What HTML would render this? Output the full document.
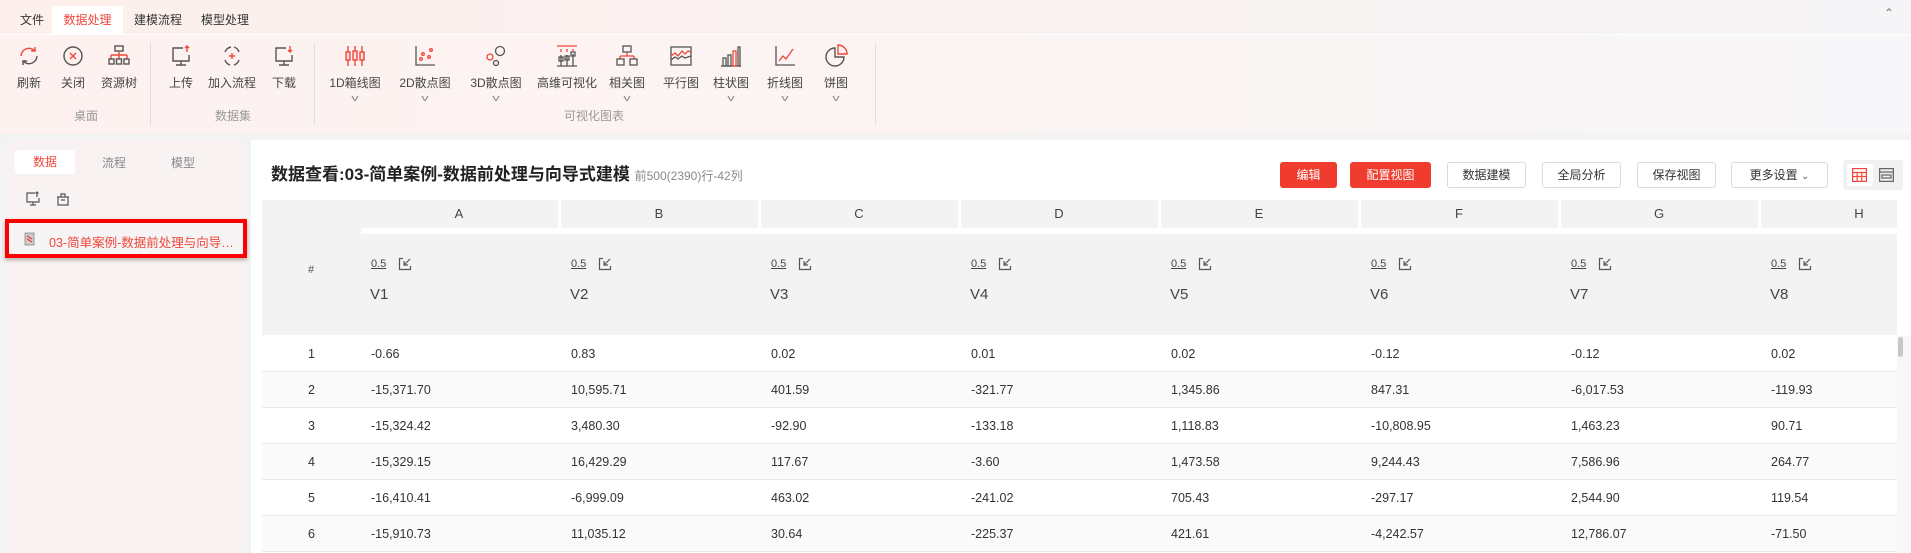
<!DOCTYPE html>
<html><head><meta charset="utf-8">
<style>
*{margin:0;padding:0;box-sizing:border-box}
body{width:1911px;height:553px;overflow:hidden;background:#f3f3f3;font-family:"Liberation Sans","Noto Sans CJK SC",sans-serif;color:#333;position:relative}
.abs{position:absolute}
#top{left:0;top:0;width:1911px;height:134px;background:linear-gradient(90deg,#fcefec 0%,#faf2f1 50%,#f5f4f6 100%)}
.tab{position:absolute;top:6px;height:28px;line-height:28px;font-size:12px;color:#333;text-align:center}
#ribbon{left:0;top:34px;width:1911px;height:99px;background:linear-gradient(90deg,#fdf2f0 0%,#fbf4f3 50%,#f7f6f8 100%);border-top:1px solid #fff}
.btn{position:absolute;top:8px;width:70px;margin-left:-35px;text-align:center;font-size:12px;color:#444}
.btn svg{display:block;margin:0 auto;width:26px;height:26px}
.btn .lb{margin-top:5px;white-space:nowrap}
.btn .chev{margin-top:2px;font-size:9px;color:#888;transform:scaleX(1.6)}
.sep{position:absolute;top:8px;width:1px;height:82px;background:#e3dcdc}
.grp{position:absolute;top:72px;font-size:12px;color:#999;transform:translateX(-50%)}
#left{left:5px;top:140px;width:240px;height:413px;background:#f8f3f2;border-radius:4px}
#main{left:251px;top:140px;width:1660px;height:413px;background:#fff}
.b{position:absolute;top:162px;height:26px;line-height:24px;font-size:12px;text-align:center;border-radius:3px;border:1px solid #dcdce0;background:#fff;color:#333}
.b.r{background:#f03c2e;border-color:#f03c2e;color:#fff}
#tbl{left:262px;top:200px;width:1635px;height:353px;overflow:hidden}
.hdr{position:absolute;top:0;left:0;width:1700px;height:135px;background:#f3f3f3}
.col{position:absolute;top:0;height:135px;width:200px}
.let{position:absolute;top:0;left:0;width:196px;height:28px;line-height:28px;text-align:center;font-size:13px;color:#444;background:#f3f3f3;border-radius:4px}
.gap{position:absolute;top:28px;left:0;width:200px;height:6px;background:#fff}
.vs{position:absolute;top:0;left:197px;width:3px;height:34px;background:#fff}
.ico{position:absolute;top:57px;left:10px;font-size:11px;color:#444;white-space:nowrap;line-height:14px}
.ico u{text-decoration:underline}
.ico svg{position:absolute;left:27px;top:0}
.vn{position:absolute;top:86px;left:9px;font-size:15px;color:#444;white-space:nowrap}
.row{position:absolute;left:0;width:1700px;height:36px;border-bottom:1px solid #e8e8e8;font-size:12.5px;color:#333}
.row span{position:absolute;top:11px}
</style></head><body>

<div id="top" class="abs">
  <div class="tab" style="left:20px;width:24px">文件</div>
  <div class="tab" style="left:52px;width:71px;background:#fff;color:#f0463a">数据处理</div>
  <div class="tab" style="left:130px;width:56px">建模流程</div>
  <div class="tab" style="left:197px;width:56px">模型处理</div>
  <div class="abs" style="left:1884px;top:6px;font-size:12px;color:#777">&#8963;</div>
</div>

<div id="ribbon" class="abs">
  <div class="btn" style="left:29px"><svg viewBox="0 0 26 26" fill="none" stroke-width="1.4"><path d="M5 13a8 8 0 0 1 14-5" stroke="#f0463a"/><path d="M19 4v4h-4" stroke="#f0463a"/><path d="M21 13a8 8 0 0 1-14 5" stroke="#555"/><path d="M7 22v-4h4" stroke="#555"/></svg><div class="lb">刷新</div></div>
  <div class="btn" style="left:73px"><svg viewBox="0 0 26 26" fill="none" stroke-width="1.4"><circle cx="13" cy="13" r="9" stroke="#555"/><path d="M10 10l6 6M16 10l-6 6" stroke="#f0463a"/></svg><div class="lb">关闭</div></div>
  <div class="btn" style="left:119px"><svg viewBox="0 0 26 26" fill="none" stroke-width="1.4"><rect x="9" y="3" width="8" height="5" stroke="#555"/><path d="M13 8v4M5 12h16M5 12v4M13 12v4M21 12v4" stroke="#f0463a"/><rect x="3" y="16" width="5" height="5" stroke="#555"/><rect x="10.5" y="16" width="5" height="5" stroke="#555"/><rect x="18" y="16" width="5" height="5" stroke="#555"/></svg><div class="lb">资源树</div></div>
  <div class="sep" style="left:150px"></div>
  <div class="btn" style="left:181px"><svg viewBox="0 0 26 26" fill="none" stroke-width="1.4"><path d="M15 5H5v13h16v-6" stroke="#555"/><path d="M13 18v4M8 22h10" stroke="#555"/><path d="M19 9V3M17 5l2-2 2 2" stroke="#f0463a"/></svg><div class="lb">上传</div></div>
  <div class="btn" style="left:232px"><svg viewBox="0 0 26 26" fill="none" stroke-width="1.4"><path d="M6 9a8 8 0 0 1 6-5M20 9a8 8 0 0 0-5-5M6 17a8 8 0 0 0 5 5M20 17a8 8 0 0 1-5 5" stroke="#555"/><path d="M13 10v6M10 13h6" stroke="#f0463a"/></svg><div class="lb">加入流程</div></div>
  <div class="btn" style="left:284px"><svg viewBox="0 0 26 26" fill="none" stroke-width="1.4"><path d="M15 5H5v13h16v-6" stroke="#555"/><path d="M13 18v4M8 22h10" stroke="#555"/><path d="M19 3v6M17 7l2 2 2-2" stroke="#f0463a"/></svg><div class="lb">下载</div></div>
  <div class="sep" style="left:314px"></div>
  <div class="btn" style="left:355px"><svg viewBox="0 0 26 26" fill="none" stroke-width="1.4" stroke="#f0463a"><path d="M6 3v20M13 3v20M20 3v20"/><rect x="4" y="9" width="4" height="8" fill="#fdd"/><rect x="11" y="8" width="4" height="9" fill="#fdd"/><rect x="18" y="9" width="4" height="8" fill="#fdd"/></svg><div class="lb">1D箱线图</div><div class="chev">v</div></div>
  <div class="btn" style="left:425px"><svg viewBox="0 0 26 26" fill="none" stroke-width="1.3"><path d="M4 3v19h19" stroke="#555"/><circle cx="9" cy="16" r="1.3" stroke="#f0463a"/><circle cx="11" cy="11" r="1.3" stroke="#f0463a"/><circle cx="17" cy="14" r="1.3" stroke="#f0463a"/><circle cx="19" cy="7" r="1.3" stroke="#f0463a"/></svg><div class="lb">2D散点图</div><div class="chev">v</div></div>
  <div class="btn" style="left:496px"><svg viewBox="0 0 26 26" fill="none" stroke-width="1.3"><circle cx="7" cy="14" r="3" stroke="#f0463a"/><circle cx="17" cy="8" r="4.5" stroke="#555"/><circle cx="13" cy="20" r="2.5" stroke="#555"/></svg><div class="lb">3D散点图</div><div class="chev">v</div></div>
  <div class="btn" style="left:567px"><svg viewBox="0 0 26 26" fill="none" stroke-width="1.3"><path d="M3 3h20" stroke="#f0463a"/><path d="M7 6v3M13 6v3M19 6v2" stroke="#f0463a"/><path d="M3 23h20M7 12v11M13 12v11M19 11v12" stroke="#555"/><rect x="5" y="14" width="4" height="4" stroke="#555"/><rect x="11" y="13" width="4" height="4" stroke="#555"/><rect x="17" y="9" width="4" height="4" stroke="#555"/></svg><div class="lb">高维可视化</div></div>
  <div class="btn" style="left:627px"><svg viewBox="0 0 26 26" fill="none" stroke-width="1.3"><rect x="9" y="3" width="8" height="6" stroke="#555"/><path d="M13 9v4M6 13h14M6 13v3M20 13v3" stroke="#f0463a"/><rect x="3" y="16" width="7" height="6" stroke="#555"/><rect x="16" y="16" width="7" height="6" stroke="#555"/></svg><div class="lb">相关图</div><div class="chev">v</div></div>
  <div class="btn" style="left:681px"><svg viewBox="0 0 26 26" fill="none" stroke-width="1.3"><rect x="3" y="4" width="20" height="18" stroke="#555"/><path d="M3 13l4-3 3 3 4-5 3 3 3-3 3 1" stroke="#f0463a"/><path d="M3 17l4-3 3 2 4-3 3 2 6-2" stroke="#555"/></svg><div class="lb">平行图</div></div>
  <div class="btn" style="left:731px"><svg viewBox="0 0 26 26" fill="none" stroke-width="1.3"><path d="M3 23h20" stroke="#555"/><rect x="5" y="15" width="3" height="8" stroke="#555"/><rect x="10" y="12" width="3" height="11" stroke="#555"/><rect x="15" y="8" width="3" height="15" stroke="#f0463a"/><rect x="20" y="4" width="2" height="19" stroke="#555"/></svg><div class="lb">柱状图</div><div class="chev">v</div></div>
  <div class="btn" style="left:785px"><svg viewBox="0 0 26 26" fill="none" stroke-width="1.3"><path d="M4 3v19h19" stroke="#555"/><path d="M7 18l4-5 3 3 7-10" stroke="#f0463a"/></svg><div class="lb">折线图</div><div class="chev">v</div></div>
  <div class="btn" style="left:836px"><svg viewBox="0 0 26 26" fill="none" stroke-width="1.4"><path d="M12 5a9 9 0 1 0 9 9h-9z" stroke="#555"/><path d="M15 2v9h9a9 9 0 0 0-9-9z" stroke="#f0463a"/></svg><div class="lb">饼图</div><div class="chev">v</div></div>
  <div class="sep" style="left:875px"></div>
  <div class="grp" style="left:86px">桌面</div>
  <div class="grp" style="left:233px">数据集</div>
  <div class="grp" style="left:594px">可视化图表</div>
</div>

<div id="left" class="abs">
  <div class="abs" style="left:10px;top:10px;width:60px;height:24px;background:#fff;border-radius:3px;color:#f0463a;font-size:12px;line-height:24px;text-align:center">数据</div>
  <div class="abs" style="left:97px;top:14px;font-size:12px;color:#888">流程</div>
  <div class="abs" style="left:166px;top:14px;font-size:12px;color:#888">模型</div>
  <svg class="abs" style="left:20px;top:51px" width="16" height="16" viewBox="0 0 16 16" fill="none" stroke="#555" stroke-width="1.2"><path d="M10 2H2v9h12V7M8 11v3M5 14h6M12 1v5M10.5 2.5L12 1l1.5 1.5"/></svg>
  <svg class="abs" style="left:50px;top:51px" width="16" height="16" viewBox="0 0 16 16" fill="none" stroke="#555" stroke-width="1.2"><path d="M2 6h12M3 6v8h10V6M6 6V3h4v3M6 9h4"/></svg>
  <div class="abs" style="left:0;top:79px;width:242px;height:39px;border:4px solid #f00;background:#f6f4f4;box-shadow:0 2px 4px rgba(0,0,0,.3)"></div>
  <svg class="abs" style="left:19px;top:92px" width="11" height="14" viewBox="0 0 11 14"><rect x="1" y="1" width="9" height="12" fill="#ccc" stroke="#888" stroke-width=".8"/><path d="M3 4l5 3M3 7l5 3" stroke="#e33" stroke-width="1.2"/></svg>
  <div class="abs" style="left:44px;top:92px;font-size:12.5px;color:#f0463a;white-space:nowrap">03-简单案例-数据前处理与向导…</div>
</div>

<div id="main" class="abs"></div>
<div class="abs" style="left:271px;top:160px;font-size:17px;font-weight:bold;color:#222;white-space:nowrap">数据查看:03-简单案例-数据前处理与向导式建模 <span style="font-size:12px;font-weight:normal;color:#888">前500(2390)行-42列</span></div>

<div class="b r" style="left:1280px;width:57px">编辑</div>
<div class="b r" style="left:1350px;width:81px">配置视图</div>
<div class="b" style="left:1447px;width:79px">数据建模</div>
<div class="b" style="left:1542px;width:79px">全局分析</div>
<div class="b" style="left:1637px;width:79px">保存视图</div>
<div class="b" style="left:1731px;width:97px">更多设置 <span style="color:#666;font-size:10px">&#8964;</span></div>
<div class="abs" style="left:1843px;top:160px;width:60px;height:30px;background:#f1f1f1;border-radius:3px">
  <div class="abs" style="left:4px;top:4px;width:26px;height:22px;background:#fff;border-radius:2px"></div>
  <svg class="abs" style="left:9px;top:8px" width="15" height="14" viewBox="0 0 15 14" fill="none" stroke="#f0463a" stroke-width="1.2"><rect x=".6" y=".6" width="13.8" height="12.8"/><path d="M.6 4.5h13.8M.6 8.5h13.8M5.2 4.5v9M9.8 4.5v9"/></svg>
  <svg class="abs" style="left:36px;top:8px" width="15" height="14" viewBox="0 0 15 14" fill="none" stroke="#666" stroke-width="1.3"><rect x=".6" y=".6" width="13.8" height="12.8"/><path d="M.6 4h13.8M3 7h9v3H3z"/></svg>
</div>

<div id="tbl" class="abs">
  <div class="hdr"></div>
  <div class="abs" style="left:46px;top:64px;font-size:11px;color:#555">#</div>
  <div class="col" style="left:99px"><div class="let">A</div><div class="vs"></div><div class="gap"></div><div class="ico"><u>0.5</u><svg width="14" height="14" viewBox="0 0 14 14" fill="none" stroke="#555" stroke-width="1.2"><path d="M5 1.5H1.5v11h11V9"/><path d="M12 2L6 8M6 4v4h4"/></svg></div><div class="vn">V1</div></div>
  <div class="col" style="left:299px"><div class="let">B</div><div class="vs"></div><div class="gap"></div><div class="ico"><u>0.5</u><svg width="14" height="14" viewBox="0 0 14 14" fill="none" stroke="#555" stroke-width="1.2"><path d="M5 1.5H1.5v11h11V9"/><path d="M12 2L6 8M6 4v4h4"/></svg></div><div class="vn">V2</div></div>
  <div class="col" style="left:499px"><div class="let">C</div><div class="vs"></div><div class="gap"></div><div class="ico"><u>0.5</u><svg width="14" height="14" viewBox="0 0 14 14" fill="none" stroke="#555" stroke-width="1.2"><path d="M5 1.5H1.5v11h11V9"/><path d="M12 2L6 8M6 4v4h4"/></svg></div><div class="vn">V3</div></div>
  <div class="col" style="left:699px"><div class="let">D</div><div class="vs"></div><div class="gap"></div><div class="ico"><u>0.5</u><svg width="14" height="14" viewBox="0 0 14 14" fill="none" stroke="#555" stroke-width="1.2"><path d="M5 1.5H1.5v11h11V9"/><path d="M12 2L6 8M6 4v4h4"/></svg></div><div class="vn">V4</div></div>
  <div class="col" style="left:899px"><div class="let">E</div><div class="vs"></div><div class="gap"></div><div class="ico"><u>0.5</u><svg width="14" height="14" viewBox="0 0 14 14" fill="none" stroke="#555" stroke-width="1.2"><path d="M5 1.5H1.5v11h11V9"/><path d="M12 2L6 8M6 4v4h4"/></svg></div><div class="vn">V5</div></div>
  <div class="col" style="left:1099px"><div class="let">F</div><div class="vs"></div><div class="gap"></div><div class="ico"><u>0.5</u><svg width="14" height="14" viewBox="0 0 14 14" fill="none" stroke="#555" stroke-width="1.2"><path d="M5 1.5H1.5v11h11V9"/><path d="M12 2L6 8M6 4v4h4"/></svg></div><div class="vn">V6</div></div>
  <div class="col" style="left:1299px"><div class="let">G</div><div class="vs"></div><div class="gap"></div><div class="ico"><u>0.5</u><svg width="14" height="14" viewBox="0 0 14 14" fill="none" stroke="#555" stroke-width="1.2"><path d="M5 1.5H1.5v11h11V9"/><path d="M12 2L6 8M6 4v4h4"/></svg></div><div class="vn">V7</div></div>
  <div class="col" style="left:1499px"><div class="let">H</div><div class="vs"></div><div class="gap"></div><div class="ico"><u>0.5</u><svg width="14" height="14" viewBox="0 0 14 14" fill="none" stroke="#555" stroke-width="1.2"><path d="M5 1.5H1.5v11h11V9"/><path d="M12 2L6 8M6 4v4h4"/></svg></div><div class="vn">V8</div></div>

  <div class="row" style="top:136px;background:#fff"><span style="left:46px">1</span><span style="left:109px">-0.66</span><span style="left:309px">0.83</span><span style="left:509px">0.02</span><span style="left:709px">0.01</span><span style="left:909px">0.02</span><span style="left:1109px">-0.12</span><span style="left:1309px">-0.12</span><span style="left:1509px">0.02</span></div>
  <div class="row" style="top:172px;background:#fafafa"><span style="left:46px">2</span><span style="left:109px">-15,371.70</span><span style="left:309px">10,595.71</span><span style="left:509px">401.59</span><span style="left:709px">-321.77</span><span style="left:909px">1,345.86</span><span style="left:1109px">847.31</span><span style="left:1309px">-6,017.53</span><span style="left:1509px">-119.93</span></div>
  <div class="row" style="top:208px;background:#fff"><span style="left:46px">3</span><span style="left:109px">-15,324.42</span><span style="left:309px">3,480.30</span><span style="left:509px">-92.90</span><span style="left:709px">-133.18</span><span style="left:909px">1,118.83</span><span style="left:1109px">-10,808.95</span><span style="left:1309px">1,463.23</span><span style="left:1509px">90.71</span></div>
  <div class="row" style="top:244px;background:#fafafa"><span style="left:46px">4</span><span style="left:109px">-15,329.15</span><span style="left:309px">16,429.29</span><span style="left:509px">117.67</span><span style="left:709px">-3.60</span><span style="left:909px">1,473.58</span><span style="left:1109px">9,244.43</span><span style="left:1309px">7,586.96</span><span style="left:1509px">264.77</span></div>
  <div class="row" style="top:280px;background:#fff"><span style="left:46px">5</span><span style="left:109px">-16,410.41</span><span style="left:309px">-6,999.09</span><span style="left:509px">463.02</span><span style="left:709px">-241.02</span><span style="left:909px">705.43</span><span style="left:1109px">-297.17</span><span style="left:1309px">2,544.90</span><span style="left:1509px">119.54</span></div>
  <div class="row" style="top:316px;background:#fafafa"><span style="left:46px">6</span><span style="left:109px">-15,910.73</span><span style="left:309px">11,035.12</span><span style="left:509px">30.64</span><span style="left:709px">-225.37</span><span style="left:909px">421.61</span><span style="left:1109px">-4,242.57</span><span style="left:1309px">12,786.07</span><span style="left:1509px">-71.50</span></div>
</div>
<div class="abs" style="left:1897px;top:336px;width:14px;height:217px;background:#f7f7f7"></div>
<div class="abs" style="left:1898px;top:337px;width:5px;height:20px;background:#c8c8c8;border-radius:3px"></div>
</body></html>
